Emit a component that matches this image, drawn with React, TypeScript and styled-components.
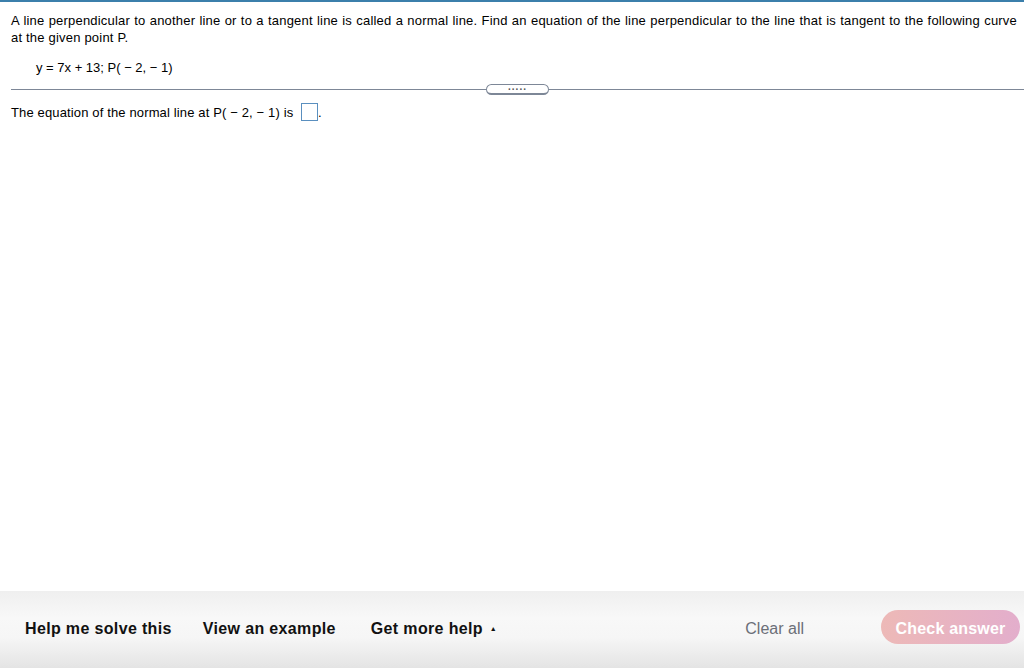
import React from 'react';
import styled, { createGlobalStyle } from 'styled-components';

const GlobalStyle = createGlobalStyle`
  html, body {
    margin: 0;
    padding: 0;
    background: #fff;
  }
  body {
    font-family: "Liberation Sans", Arial, sans-serif;
    color: #000;
  }
`;

function App() {
  return (
    <Page>
      <GlobalStyle />
      <Question>
        <Prompt>
          A line perpendicular to another line or to a tangent line is called a normal line. Find an equation of the line
          perpendicular to the line that is tangent to the following curve at the given point P.
        </Prompt>
        <Given>y = 7x + 13; P( − 2, − 1)</Given>
      </Question>

      <Divider>
        <Pill>
          <Dots>.....</Dots>
        </Pill>
      </Divider>

      <Answer>
        The equation of the normal line at P( − 2, − 1) is <AnswerBox />.
      </Answer>

      <Footer>
        <HelpLinks>
          <FooterLink>Help me solve this</FooterLink>
          <FooterLink>View an example</FooterLink>
          <FooterLink>
            Get more help <Caret>▲</Caret>
          </FooterLink>
        </HelpLinks>
        <Actions>
          <ClearButton>Clear all</ClearButton>
          <CheckButton>Check answer</CheckButton>
        </Actions>
      </Footer>
    </Page>
  );
}

const Page = styled.div`
  display: flex;
  flex-direction: column;
  height: 668px;
  border-top: 2px solid #3b7fab;
  box-sizing: border-box;
  font-size: 13px;
`;

const Question = styled.div`
  padding: 10px 7px 0 11px;
`;

const Prompt = styled.p`
  margin: 0;
  line-height: 17px;
  letter-spacing: 0.2px;
  text-align: justify;
`;

const Given = styled.div`
  margin: 13px 0 0 25px;
  line-height: 17px;
`;

const Divider = styled.div`
  position: relative;
  margin: 13px 0 0 11px;
  height: 1px;
  background: #7d8797;
`;

const Pill = styled.div`
  position: absolute;
  left: 475px;
  top: -5px;
  width: 61px;
  height: 8px;
  background: #fff;
  border: 1px solid #7d8797;
  border-bottom-width: 2px;
  border-radius: 6px;
  display: flex;
  justify-content: center;
  align-items: center;
`;

const Dots = styled.span`
  font-size: 10px;
  font-weight: 700;
  line-height: 8px;
  letter-spacing: 1px;
  color: #555;
  margin-top: -4px;
`;

const Answer = styled.div`
  margin: 13px 0 0 11px;
  line-height: 17px;
  letter-spacing: 0.14px;
  display: flex;
  align-items: center;
  white-space: pre;
`;

const AnswerBox = styled.span`
  display: inline-block;
  width: 15px;
  height: 16px;
  border: 1px solid #5a8fbf;
  margin-left: 4px;
`;

const Footer = styled.div`
  margin-top: auto;
  height: 77px;
  display: flex;
  align-items: center;
  justify-content: space-between;
  padding: 0 4px 5px 25px;
  box-sizing: border-box;
  background: linear-gradient(to bottom, #efefef 0%, #f8f8f8 35%, #f6f6f6 60%, #e4e4e4 100%);
`;

const HelpLinks = styled.div`
  display: flex;
  gap: 31px;
  margin-top: 4px;
`;

const FooterLink = styled.span`
  font-size: 16px;
  font-weight: 700;
  letter-spacing: 0.35px;
  color: #111;
  &:nth-child(3) {
    margin-left: 4px;
  }
`;

const Caret = styled.span`
  font-size: 7px;
  vertical-align: 3px;
  margin-left: 2px;
`;

const Actions = styled.div`
  display: flex;
  align-items: center;
  gap: 77px;
`;

const ClearButton = styled.span`
  font-size: 16px;
  color: #6b6f78;
  margin-top: 4px;
`;

const CheckButton = styled.button`
  width: 139px;
  height: 34px;
  border: none;
  border-radius: 17px;
  background: linear-gradient(to right, #edb9b7, #e3aecc);
  color: #fff;
  font-family: "Liberation Sans", Arial, sans-serif;
  font-size: 16px;
  font-weight: 700;
  letter-spacing: 0.2px;
  padding: 3px 0 0;
`;

export default App;
